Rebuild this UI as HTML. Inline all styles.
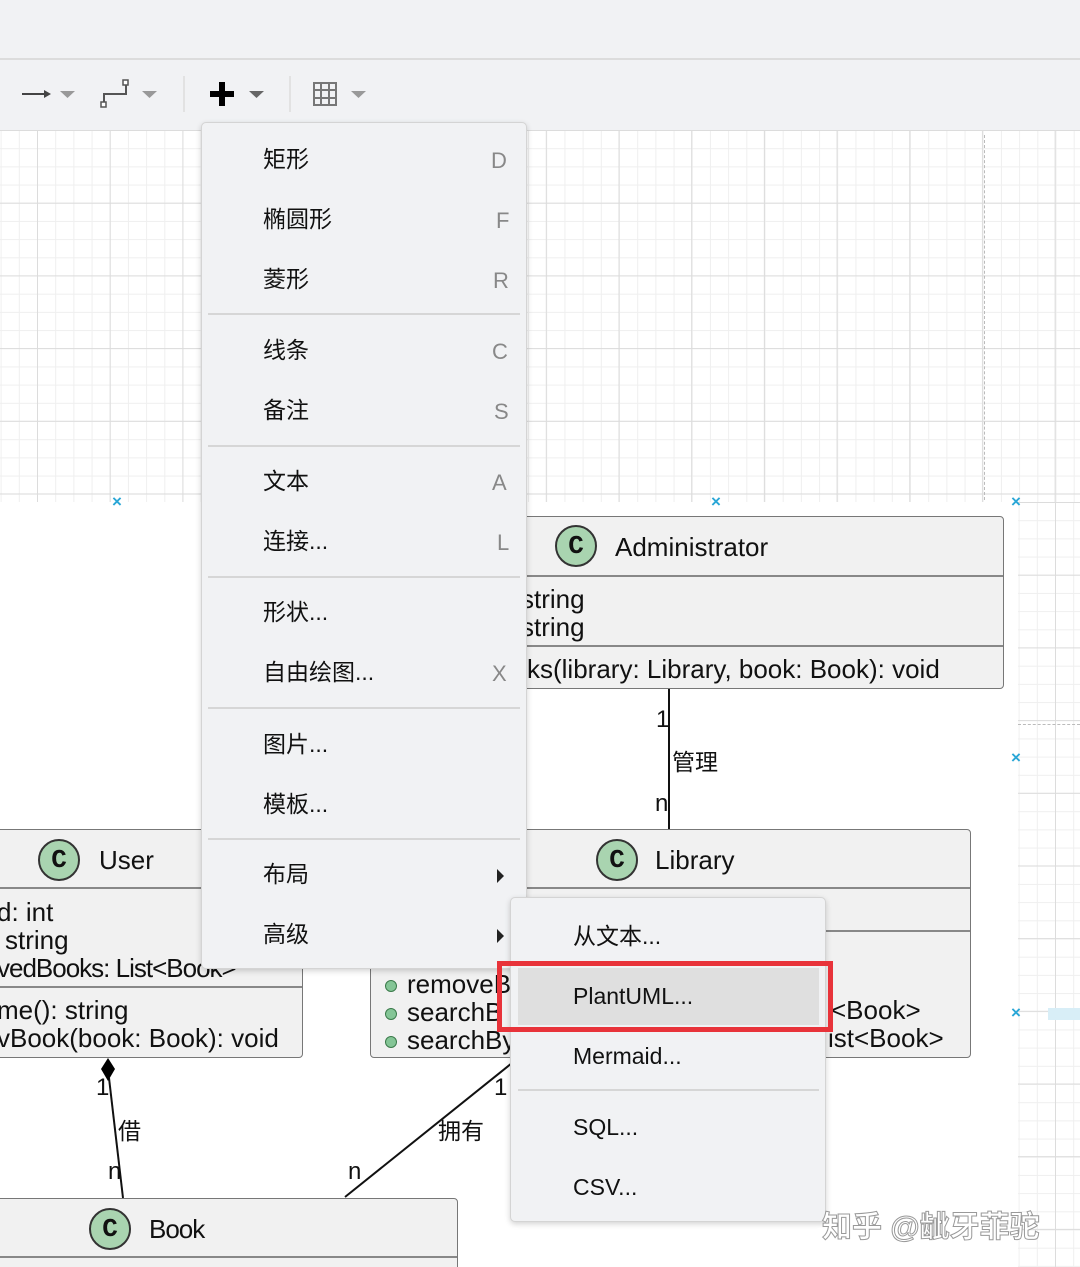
<!DOCTYPE html>
<html><head><meta charset="utf-8"><style>
*{margin:0;padding:0;box-sizing:border-box}
html,body{width:1080px;height:1267px;overflow:hidden}
body{position:relative;background:#fff;font-family:"Liberation Sans","Noto Sans CJK SC",sans-serif;color:#111}
.a{position:absolute}
.grid{background-color:#fff;background-image:linear-gradient(#dcdcdc 1px,transparent 1px),linear-gradient(90deg,#dcdcdc 1px,transparent 1px),linear-gradient(#efefef 1px,transparent 1px),linear-gradient(90deg,#efefef 1px,transparent 1px);background-size:72.7px 72.7px,72.7px 72.7px,18.2px 18.2px,18.2px 18.2px}
.box{position:absolute;background:#f1f1f1;border:1.5px solid #777;border-radius:4px;overflow:hidden}
.sep{position:absolute;left:0;right:0;height:2px;background:#888}
.c{position:absolute;width:42px;height:42px;border-radius:50%;background:#a9d4b0;border:2px solid #333;font:bold 26px "Liberation Mono",monospace;text-align:center;line-height:38px}
.t{position:absolute;font-size:26px;white-space:nowrap;line-height:28px}
.menu{position:absolute;background:#f1f2f4;border:1px solid #d4d4d4;border-radius:5px;box-shadow:0 2px 6px rgba(0,0,0,.18)}
.mi{position:absolute;font-size:23px;white-space:nowrap;color:#111;line-height:28px}
.sc{position:absolute;font-size:22px;color:#888;line-height:28px}
.ms{position:absolute;height:2px;background:#d6d6d6}
.x{position:absolute;color:#29a6d6;font-size:17px;font-weight:bold}
</style></head><body>
<div class="a" style="left:0;top:0;width:1080px;height:130px;background:#f1f2f4"></div>
<div class="a" style="left:0;top:58px;width:1080px;height:2px;background:#dcdcdc"></div>
<svg class="a" style="left:0;top:60px" width="400" height="70">
<line x1="22" y1="34" x2="46" y2="34" stroke="#444" stroke-width="2"/><path d="M44 30 L51 34 L44 38Z" fill="#444"/>
<path d="M60 31 L75 31 L67.5 38Z" fill="#999"/>
<path d="M104 45 V34 H126 V23" fill="none" stroke="#555" stroke-width="2"/><rect x="101" y="42" width="5" height="5" fill="#fff" stroke="#555" stroke-width="1.5"/><rect x="123" y="20" width="5" height="5" fill="#fff" stroke="#555" stroke-width="1.5"/>
<path d="M142 31 L157 31 L149.5 38Z" fill="#999"/>
<line x1="184" y1="16" x2="184" y2="52" stroke="#ddd" stroke-width="1.5"/>
<path d="M219 22 h6 v9 h9 v6 h-9 v9 h-6 v-9 h-9 v-6 h9z" fill="#000"/>
<path d="M249 31 L264 31 L256.5 38Z" fill="#666"/>
<line x1="290" y1="16" x2="290" y2="52" stroke="#ddd" stroke-width="1.5"/>
<g stroke="#777" stroke-width="2" fill="none"><rect x="314" y="23" width="22" height="22"/><line x1="321" y1="23" x2="321" y2="45"/><line x1="329" y1="23" x2="329" y2="45"/><line x1="314" y1="30" x2="336" y2="30"/><line x1="314" y1="38" x2="336" y2="38"/></g>
<path d="M351 31 L366 31 L358.5 38Z" fill="#999"/>
</svg>
<div class="a grid" style="left:0;top:130px;width:1080px;height:372px;background-position:37px 0"></div>
<div class="a grid" style="left:1018px;top:502px;width:62px;height:765px;background-position:37px 0"></div>
<div class="a" style="left:984px;top:135px;height:365px;border-left:1.5px dashed #bbb"></div>
<div class="a" style="left:1018px;top:724px;width:62px;border-top:1.5px dashed #bbb"></div>
<div class="x" style="left:112px;top:492px">×</div>
<div class="x" style="left:711px;top:492px">×</div>
<div class="x" style="left:1011px;top:492px">×</div>
<div class="x" style="left:1011px;top:748px">×</div>
<div class="x" style="left:1011px;top:1003px">×</div>
<div class="a" style="left:1048px;top:1008px;width:32px;height:12px;background:#d8eef7"></div>
<svg class="a" style="left:0;top:0" width="1080" height="1267">
<line x1="669" y1="688" x2="669" y2="829" stroke="#111" stroke-width="2"/>
<line x1="109" y1="1078" x2="123" y2="1198" stroke="#111" stroke-width="2"/>
<path d="M108 1058 L115 1069 L108 1081 L101 1069Z" fill="#000"/>
<line x1="345" y1="1197" x2="512" y2="1063" stroke="#111" stroke-width="2"/>
</svg>
<div class="t" style="left:656px;top:706px;font-size:24px">1</div>
<div class="t" style="left:672px;top:748px;font-size:23px">管理</div>
<div class="t" style="left:655px;top:790px;font-size:24px">n</div>
<div class="t" style="left:96px;top:1074px;font-size:24px">1</div>
<div class="t" style="left:118px;top:1117px;font-size:23px">借</div>
<div class="t" style="left:108px;top:1158px;font-size:24px">n</div>
<div class="t" style="left:494px;top:1074px;font-size:24px">1</div>
<div class="t" style="left:438px;top:1117px;font-size:23px">拥有</div>
<div class="t" style="left:348px;top:1158px;font-size:24px">n</div>
<div class="box" style="left:480px;top:516px;width:524px;height:173px">
<div class="c" style="left:74px;top:8px">C</div><div class="t" style="left:134px;top:16px">Administrator</div>
<div class="sep" style="top:58px"></div>
<div class="t" style="left:40px;top:68px">string</div><div class="t" style="left:40px;top:96px">string</div>
<div class="sep" style="top:128px"></div>
<div class="t" style="left:46px;top:138px">ks(library: Library, book: Book): void</div>
</div>
<div class="box" style="left:370px;top:829px;width:601px;height:229px">
<div class="c" style="left:225px;top:9px">C</div><div class="t" style="left:284px;top:16px">Library</div>
<div class="sep" style="top:57px"></div><div class="sep" style="top:100px"></div>
<div class="t" style="left:460px;top:166px">&lt;Book&gt;</div>
<div class="t" style="left:457px;top:194px">ist&lt;Book&gt;</div>
<div class="a" style="left:14px;top:150px;width:12px;height:12px;border-radius:50%;background:#84c596;border:1.5px solid #3a7a4a"></div>
<div class="a" style="left:14px;top:178px;width:12px;height:12px;border-radius:50%;background:#84c596;border:1.5px solid #3a7a4a"></div>
<div class="a" style="left:14px;top:206px;width:12px;height:12px;border-radius:50%;background:#84c596;border:1.5px solid #3a7a4a"></div>
<div class="t" style="left:36px;top:140px">removeB</div>
<div class="t" style="left:36px;top:168px">searchB</div>
<div class="t" style="left:36px;top:196px">searchBy</div>
</div>
<div class="box" style="left:-10px;top:829px;width:313px;height:229px">
<div class="c" style="left:47px;top:9px">C</div><div class="t" style="left:108px;top:16px">User</div>
<div class="sep" style="top:57px"></div>
<div class="t" style="left:6px;top:68px">d: int</div>
<div class="t" style="left:14px;top:96px">string</div>
<div class="t" style="left:6px;top:124px;letter-spacing:-1px">vedBooks: List&lt;Book&gt;</div>
<div class="sep" style="top:156px"></div>
<div class="t" style="left:6px;top:166px">me(): string</div>
<div class="t" style="left:6px;top:194px">vBook(book: Book): void</div>
</div>
<div class="box" style="left:-10px;top:1198px;width:468px;height:80px">
<div class="c" style="left:98px;top:9px">C</div><div class="t" style="left:158px;top:16px;letter-spacing:-1px">Book</div>
<div class="sep" style="top:57px"></div>
</div>
<div class="menu" style="left:201px;top:122px;width:326px;height:847px">
<div class="mi" style="left:61px;top:22px">矩形</div><div class="sc" style="left:289px;top:24px">D</div>
<div class="mi" style="left:61px;top:82px">椭圆形</div><div class="sc" style="left:294px;top:84px">F</div>
<div class="mi" style="left:61px;top:142px">菱形</div><div class="sc" style="left:291px;top:144px">R</div>
<div class="ms" style="left:6px;width:312px;top:190px"></div>
<div class="mi" style="left:61px;top:213px">线条</div><div class="sc" style="left:290px;top:215px">C</div>
<div class="mi" style="left:61px;top:273px">备注</div><div class="sc" style="left:292px;top:275px">S</div>
<div class="ms" style="left:6px;width:312px;top:322px"></div>
<div class="mi" style="left:61px;top:344px">文本</div><div class="sc" style="left:290px;top:346px">A</div>
<div class="mi" style="left:61px;top:404px">连接...</div><div class="sc" style="left:295px;top:406px">L</div>
<div class="ms" style="left:6px;width:312px;top:453px"></div>
<div class="mi" style="left:61px;top:475px">形状...</div>
<div class="mi" style="left:61px;top:535px">自由绘图...</div><div class="sc" style="left:290px;top:537px">X</div>
<div class="ms" style="left:6px;width:312px;top:584px"></div>
<div class="mi" style="left:61px;top:607px">图片...</div>
<div class="mi" style="left:61px;top:667px">模板...</div>
<div class="ms" style="left:6px;width:312px;top:715px"></div>
<div class="mi" style="left:61px;top:737px">布局</div>
<div class="mi" style="left:61px;top:797px">高级</div>
<svg class="a" style="left:294px;top:744px" width="10" height="120"><path d="M1 2 L8 9 L1 16Z" fill="#222"/><path d="M1 62 L8 69 L1 76Z" fill="#222"/></svg>
</div>
<div class="menu" style="left:510px;top:897px;width:316px;height:325px">
<div class="a" style="left:7px;top:70px;width:301px;height:57px;background:#dfdfdf"></div>
<div class="mi" style="left:62px;top:24px">从文本...</div>
<div class="mi" style="left:62px;top:84px">PlantUML...</div>
<div class="mi" style="left:62px;top:144px">Mermaid...</div>
<div class="ms" style="left:7px;width:301px;top:191px"></div>
<div class="mi" style="left:62px;top:215px">SQL...</div>
<div class="mi" style="left:62px;top:275px">CSV...</div>
</div>
<div class="a" style="left:497px;top:961px;width:336px;height:71px;border:5px solid #e8333a"></div>
<div class="a" style="left:822px;top:1202px;font-size:30px;color:#fff;-webkit-text-stroke:1px #999;white-space:nowrap;font-weight:bold">知乎 @龇牙菲驼</div>
</body></html>
